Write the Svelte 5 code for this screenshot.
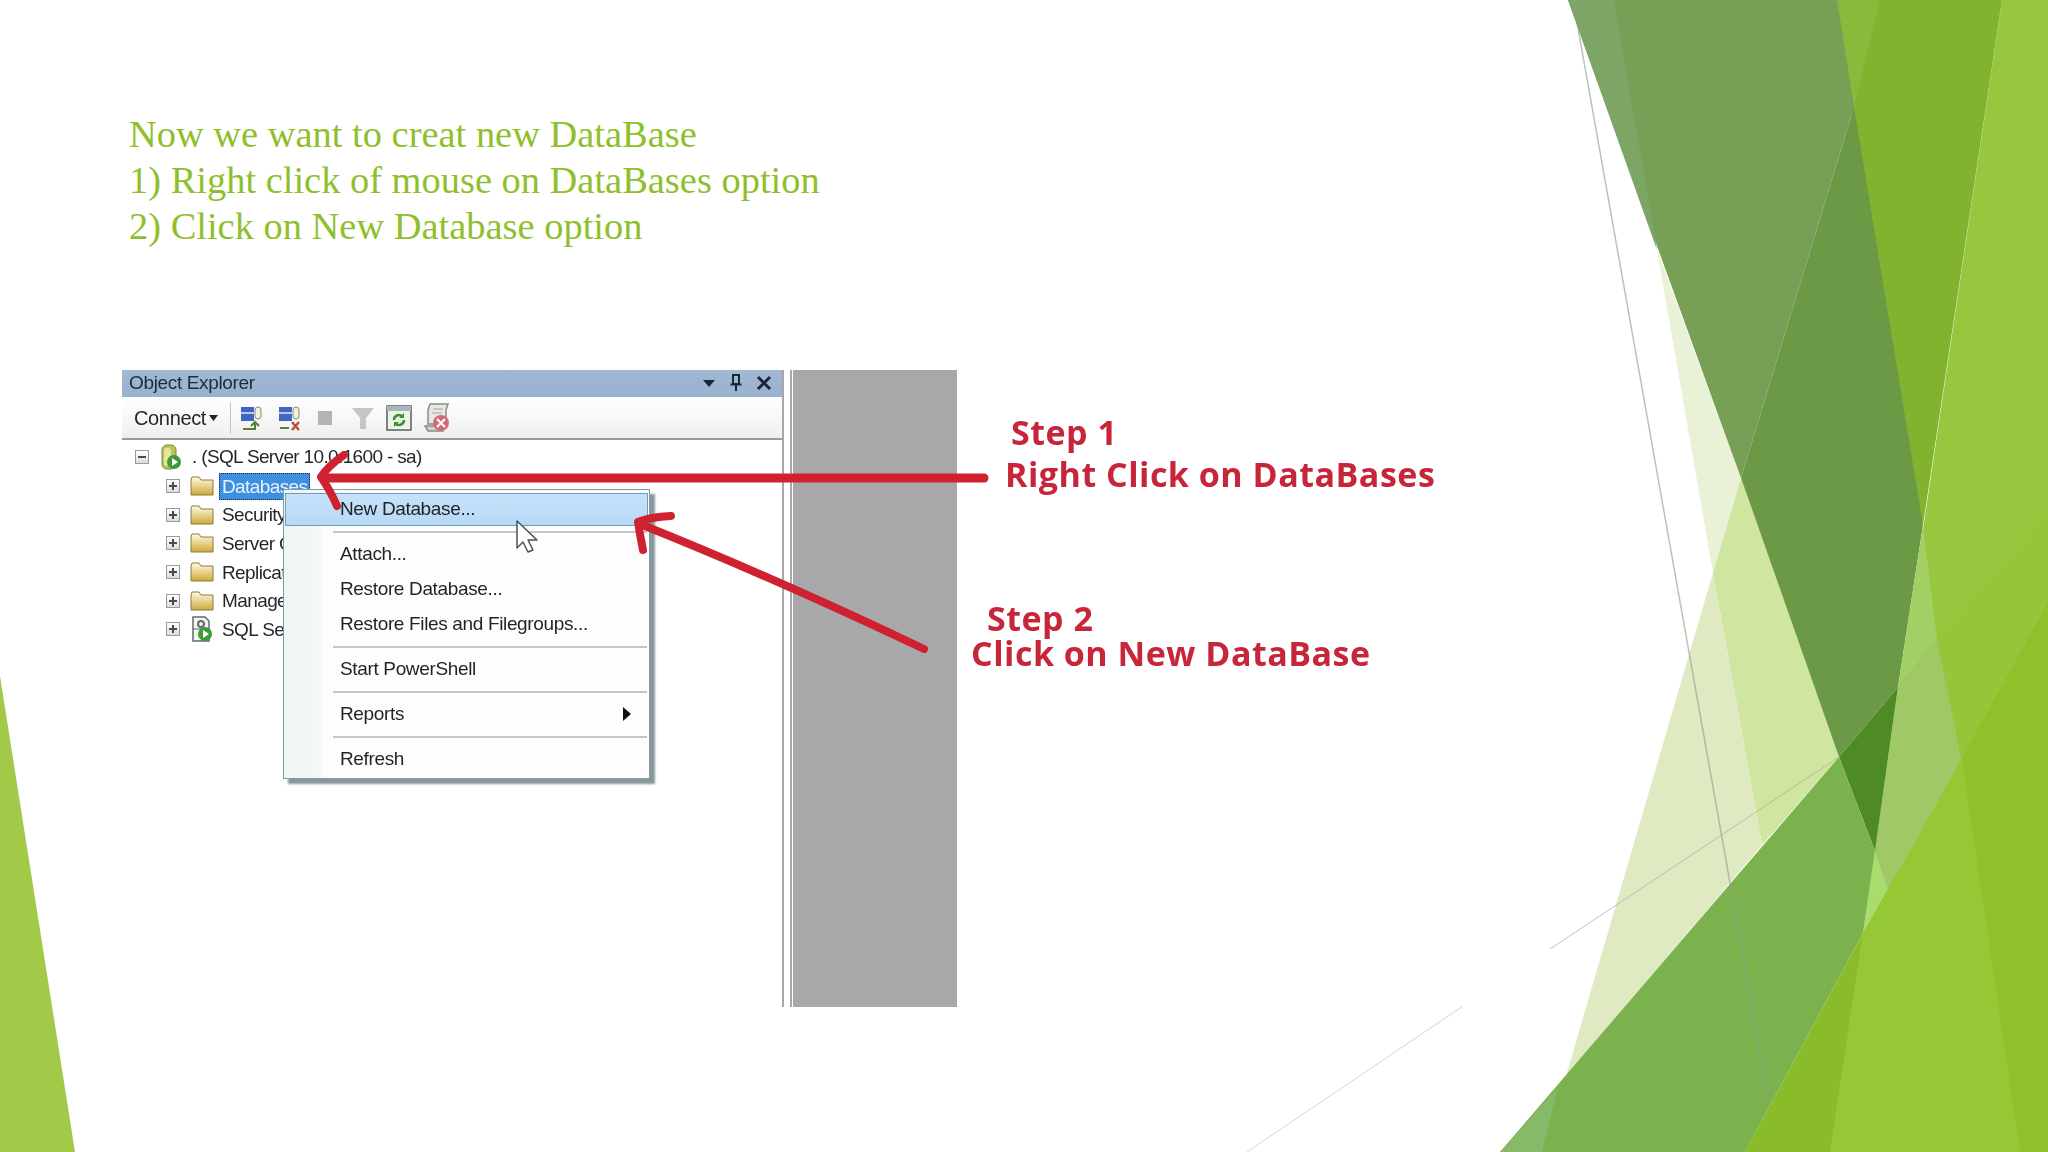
<script lang="ts">
  const intro = [
    "Now we want to creat new DataBase",
    "1) Right click of mouse on DataBases option",
    "2) Click on New Database option",
  ];

  const facets = [
    { points: "2002,0 2048,0 2048,1152 1830,1152", fill: "#98c63e" },
    { points: "1837,0 2002,0 1923,525 1900,530", fill: "#82b32f" },
    { points: "1837,0 1880,0 1854,107", fill: "#8aba3b" },
    { points: "1657,250 1741,478 1713,573", fill: "#e9f2d6" },
    { points: "1713,573 1741,478 1839,757 1762,845", fill: "#d0e5a0" },
    { points: "1713,573 1762,845 1566,1076", fill: "#dfeac3" },
    { points: "1741,478 1713,573 1566,1076", fill: "#dfeac3" },
    { points: "1854,107 1923,525 1898,687 1839,757 1741,478", fill: "#6b9945" },
    { points: "1568,0 1837,0 1854,107 1741,478", fill: "#789f56" },
    { points: "1568,0 1614,0 1657,250", fill: "#7da666" },
    { points: "1923,525 1937,639 1898,687", fill: "#a3d065" },
    { points: "1898,687 1937,639 1962,762 1888,889 1875,851", fill: "#a0c866" },
    { points: "1937,639 2048,514 2048,604 1962,762", fill: "#95c63a" },
    { points: "1839,757 1898,687 1875,851", fill: "#4f8b24" },
    { points: "1500,1152 1839,757 1875,851 1863,933 1745,1152", fill: "#7bb24d" },
    { points: "1500,1152 1558,1087 1542,1152", fill: "#86b968" },
    { points: "1875,851 1888,889 1863,933", fill: "#a9dc6c" },
    { points: "2048,602 2048,1152 1745,1152", fill: "#92c02b" },
    { points: "1863,933 1830,1152 1745,1152", fill: "#8abb2b" },
    { points: "1863,933 1962,760 2020,1152 1830,1152", fill: "#96c835" },
  ];

  const treeRows = [
    { label: "Databases", icon: "folder", selected: true },
    { label: "Security", icon: "folder" },
    { label: "Server Objects", icon: "folder" },
    { label: "Replication", icon: "folder" },
    { label: "Management", icon: "folder" },
    { label: "SQL Server Agent", icon: "agent" },
  ];

  const menuGroups = [
    ["New Database..."],
    ["Attach...", "Restore Database...", "Restore Files and Filegroups..."],
    ["Start PowerShell"],
    ["Reports"],
    ["Refresh"],
  ];
</script>

<div class="slide">
  <svg class="facets" viewBox="0 0 2048 1152" aria-hidden="true">
    <polygon points="0,676 75,1152 0,1152" fill="#a2c948" />
    {#each facets as facet}
      <polygon points={facet.points} fill={facet.fill} />
    {/each}
    <line x1="1573" y1="0" x2="1769" y2="1102" stroke="#8f9a88" stroke-opacity="0.6" stroke-width="1.5" />
    <line x1="1550" y1="949" x2="1839" y2="757" stroke="#a9ad9f" stroke-opacity="0.7" />
    <line x1="1247" y1="1152" x2="1463" y2="1006" stroke="#d4d4d4" />
  </svg>

  <div class="content">
    <div class="intro">
      {#each intro as line}
        <div>{line}</div>
      {/each}
    </div>

    <div class="shot-row">
      <section class="explorer">
        <header class="title-bar">
          <span>Object Explorer</span>
          <div class="title-icons">
            <svg width="14" height="10" viewBox="0 0 14 10"><path d="M1 2h12L7 9z" fill="#1c2530" /></svg>
            <svg width="14" height="18" viewBox="0 0 14 18">
              <path d="M4 1h6v9H4zM1.5 10.500h11M7 11v6" fill="none" stroke="#1c2530" stroke-width="2" />
            </svg>
            <svg width="16" height="16" viewBox="0 0 16 16">
              <path d="M2 2l12 12M14 2L2 14" stroke="#1c2530" stroke-width="3" />
            </svg>
          </div>
        </header>

        <div class="toolbar">
          <span class="connect">Connect</span>
          <svg class="caret" width="9" height="6" viewBox="0 0 9 6"><path d="M0 0h9L4.500 6z" fill="#222" /></svg>
          <span class="tool-sep"></span>
          <svg class="tool" width="26" height="26" viewBox="0 0 26 26">
            <rect x="2" y="2" width="13" height="14" fill="#3f66c4" />
            <rect x="2" y="7" width="13" height="2" fill="#b9c9ee" />
            <rect x="16" y="2" width="6" height="12" rx="3" fill="#f4f0dc" stroke="#8c8c7a" />
            <path d="M4 24h12v-7M12 21l4-4 4 4" fill="none" stroke="#58803a" stroke-width="2" />
          </svg>
          <svg class="tool" width="26" height="26" viewBox="0 0 26 26">
            <rect x="2" y="2" width="13" height="14" fill="#3f66c4" />
            <rect x="2" y="7" width="13" height="2" fill="#b9c9ee" />
            <rect x="16" y="2" width="6" height="12" rx="3" fill="#f4f0dc" stroke="#8c8c7a" />
            <path d="M3 23h9" stroke="#58803a" stroke-width="2" />
            <path d="M15 17l7 8M22 17l-7 8" stroke="#c0503c" stroke-width="2.500" />
          </svg>
          <span class="stop"></span>
          <svg class="tool funnel" width="24" height="24" viewBox="0 0 24 24">
            <path d="M1 2h22l-8 10v11h-6V12z" fill="#c3c6c3" />
          </svg>
          <svg class="tool refresh" width="26" height="26" viewBox="0 0 26 26">
            <rect x="1" y="1" width="24" height="24" fill="#eef2ea" stroke="#56605a" stroke-width="1.500" />
            <rect x="1" y="1" width="24" height="5" fill="#a9b6b8" />
            <path d="M8 15a5 5 0 0 1 9-3M18 15a5 5 0 0 1-9 3" fill="none" stroke="#3c8f30" stroke-width="2.500" />
            <path d="M18 8v5h-5zM8 22v-5h5z" fill="#3c8f30" />
          </svg>
          <svg class="tool" width="28" height="32" viewBox="0 0 28 32">
            <path d="M7 2h18l-2 6v14H5V8z" fill="#e8e8e2" stroke="#8b8b8b" stroke-width="1.500" />
            <path d="M2 24h18v5H5z" fill="#d2d2cc" stroke="#8b8b8b" stroke-width="1.500" />
            <path d="M10 7h10M9 11h10" stroke="#a0a0a0" />
            <circle cx="18" cy="21" r="8" fill="#d26a78" />
            <path d="M14 17l8 8M22 17l-8 8" stroke="#fff" stroke-width="2" />
          </svg>
        </div>

        <div class="tree">
          <div class="row server">
            <span class="expander"><i></i></span>
            <svg class="node-icon" width="24" height="26" viewBox="0 0 24 26">
              <rect x="3" y="1" width="14" height="24" rx="5" fill="#b8c55a" stroke="#7d8a3a" />
              <rect x="5" y="4" width="7" height="18" rx="3" fill="#e5e59b" />
              <circle cx="15" cy="18" r="7" fill="#3e9a37" />
              <path d="M13 14l6 4-6 4z" fill="#fff" />
            </svg>
            <span class="label">. (SQL Server 10.0.1600 - sa)</span>
          </div>

          {#each treeRows as row}
            <div class="row child">
              <span class="expander plus"><i></i></span>
              {#if row.icon === "folder"}
                <svg class="node-icon" width="24" height="20" viewBox="0 0 24 20">
                  <defs>
                    <linearGradient id="folder-fill" x1="0" y1="0" x2="0" y2="1">
                      <stop offset="0" stop-color="#fffbe2" />
                      <stop offset="1" stop-color="#cfa83a" />
                    </linearGradient>
                  </defs>
                  <path d="M1 4l1-3h7l2 3h12v15H1z" fill="url(#folder-fill)" stroke="#8e7a3f" />
                </svg>
              {:else}
                <svg class="node-icon" width="24" height="26" viewBox="0 0 24 26">
                  <path d="M3 1h12l4 4v20H3z" fill="#f4f6f2" stroke="#5f6b66" stroke-width="1.500" />
                  <circle cx="11" cy="8" r="3" fill="none" stroke="#5f6b66" stroke-width="2" />
                  <path d="M3 13h12" stroke="#5f6b66" />
                  <circle cx="15" cy="18" r="7" fill="#3e9a37" />
                  <path d="M13 14l6 4-6 4z" fill="#fff" />
                </svg>
              {/if}
              <span class="label" class:selected={row.selected}>{row.label}</span>
            </div>
          {/each}

          <div class="context-menu">
            {#each menuGroups as group, groupIndex}
              {#if groupIndex > 0}
                <div class="menu-sep" class:first={groupIndex === 1}></div>
              {/if}
              {#each group as item}
                <div class="menu-item" class:active={item === "New Database..."}>
                  <span>{item}</span>
                  {#if item === "Reports"}
                    <svg width="8" height="14" viewBox="0 0 8 14"><path d="M0 0l8 7-8 7z" fill="#111" /></svg>
                  {/if}
                </div>
              {/each}
            {/each}
          </div>
        </div>
      </section>

      <div class="splitter"></div>

      <div class="notes">
        <p class="note first">
          <span class="step">Step 1</span>
          <span class="action">Right Click on DataBases</span>
        </p>
        <p class="note second">
          <span class="step">Step 2</span>
          <span class="action">Click on New DataBase</span>
        </p>
      </div>
    </div>
  </div>

  <svg class="overlay" viewBox="0 0 2048 1152" aria-hidden="true">
    <g fill="none" stroke="#cf2230" stroke-linecap="round" stroke-linejoin="round">
      <path d="M984 478L324 478" stroke-width="9" />
      <path d="M344 455Q328 466 321 477Q330 490 337 506" stroke-width="8" />
      <path d="M924 649Q775 578 640 524" stroke-width="8" />
      <path d="M671 516Q650 517 638 522Q640 535 643 550" stroke-width="8" />
    </g>
    <path
      d="M517 521v27l6-6 5 10 5-2-5-10h9z"
      fill="#fff"
      stroke="#47525a"
      stroke-width="1.500"
      stroke-linejoin="round"
    />
  </svg>
</div>

<style>
  :global(body) {
    margin: 0;
    background: #fff;
  }

  .slide {
    position: relative;
    width: 2048px;
    height: 1152px;
    overflow: hidden;
    background: #fff;
  }

  .facets,
  .overlay {
    position: absolute;
    inset: 0;
    width: 2048px;
    height: 1152px;
    pointer-events: none;
  }

  .overlay {
    filter: blur(0.4px);
  }

  .content {
    position: relative;
    padding: 112px 0 0 122px;
  }

  .intro {
    padding-left: 7px;
    color: #8fbf2c;
    font-family: "Liberation Serif", serif;
    font-size: 38.45px;
    line-height: 45.8px;
    white-space: nowrap;
  }

  .shot-row {
    display: flex;
    width: 835px;
    height: 637px;
    margin-top: 120.6px;
  }

  .explorer {
    display: flex;
    flex-direction: column;
    flex: none;
    box-sizing: border-box;
    width: 662px;
    border-right: 2px solid #a8a8ac;
    background: #fff;
    color: #23282c;
    font-family: "Liberation Sans", sans-serif;
    font-size: 19px;
    letter-spacing: -0.35px;
    filter: blur(0.45px);
  }

  .title-bar {
    display: flex;
    align-items: center;
    justify-content: space-between;
    height: 27px;
    padding: 0 10px 0 7px;
    background: linear-gradient(#a2b8d4, #98b1cf);
    color: #1d2a38;
  }

  .title-icons {
    display: flex;
    align-items: center;
    gap: 13px;
  }

  .toolbar {
    display: flex;
    align-items: center;
    box-sizing: border-box;
    height: 43px;
    padding: 2px 0 0 12px;
    border-bottom: 2px solid #9b9b9b;
    background: linear-gradient(#fff, #efefef);
  }

  .connect {
    font-size: 20px;
  }

  .caret {
    margin-left: 3px;
  }

  .tool-sep {
    width: 1px;
    height: 32px;
    margin: 0 8px 0 12px;
    background: #c4c4c4;
  }

  .tool {
    flex: none;
    margin-right: 12px;
  }

  .stop {
    width: 14px;
    height: 14px;
    margin: 0 19px 0 3px;
    background: #b2b4b2;
  }

  .funnel {
    margin-right: 11px;
  }

  .refresh {
    margin-right: 11px;
  }

  .tree {
    position: relative;
    flex: 1;
    padding-top: 3px;
  }

  .row {
    display: flex;
    align-items: center;
    height: 28.7px;
    white-space: nowrap;
  }

  .server {
    padding-left: 13px;
  }

  .child {
    padding-left: 44px;
  }

  .expander {
    position: relative;
    flex: none;
    box-sizing: border-box;
    width: 14px;
    height: 14px;
    border: 1px solid #9a9a9a;
    background: linear-gradient(#fff, #dcdcdc);
  }

  .expander i {
    position: absolute;
    top: 5px;
    left: 2px;
    width: 8px;
    height: 2px;
    background: #4a4a4a;
  }

  .plus::after {
    content: "";
    position: absolute;
    top: 2px;
    left: 5px;
    width: 2px;
    height: 8px;
    background: #4a4a4a;
  }

  .node-icon {
    flex: none;
  }

  .server .node-icon {
    margin-left: 10px;
  }

  .server .label {
    margin-left: 9px;
    letter-spacing: -0.65px;
  }

  .child .node-icon {
    margin-left: 10px;
  }

  .child .label {
    box-sizing: border-box;
    height: 27px;
    margin-left: 5px;
    padding: 0 2px;
    line-height: 26px;
    letter-spacing: -0.6px;
    border: 1px dotted transparent;
  }

  .child .label.selected {
    border-color: #1b2b4c;
    background: #3f8fe0;
    color: #e6f2ff;
  }

  .context-menu {
    position: absolute;
    top: 49px;
    left: 161px;
    box-sizing: border-box;
    width: 367px;
    height: 290px;
    padding: 3px 2px 0;
    border: 1px solid #7f9ba3;
    background: linear-gradient(to right, #eef7f5, #f6f7f6 38px, #fdfdfd 38px);
    box-shadow: 5px 5px 2px #87979c;
    color: #1e2226;
  }

  .menu-item {
    display: flex;
    align-items: center;
    justify-content: space-between;
    height: 35px;
    padding: 0 16px 0 54px;
  }

  .menu-item.active {
    height: 33px;
    margin: 0 -1px;
    border: 1px solid #6a9fb5;
    box-sizing: border-box;
    background: linear-gradient(#c7e2fa, #b7d9f6);
  }

  .menu-sep {
    height: 2px;
    margin: 4px 0 4px 47px;
    background: #c6c6c6;
  }

  .menu-sep.first {
    margin: 5px 0 4px 47px;
  }

  .splitter {
    flex: none;
    box-sizing: border-box;
    width: 3px;
    margin-left: 6px;
    border-left: 2px solid #a8a8ac;
    background: #fff;
  }

  .notes {
    flex: none;
    position: relative;
    width: 164px;
    height: 637px;
    background: #a8a7a9;
  }

  .note {
    position: absolute;
    left: 164px;
    margin: 0;
    color: #c7263a;
    font-family: "Open Sans", "Liberation Sans", sans-serif;
    font-size: 34px;
    font-weight: 700;
    letter-spacing: 0.5px;
    white-space: nowrap;
    filter: blur(0.4px);
  }

  .note span {
    display: block;
  }

  .note.first {
    top: 41px;
    line-height: 42px;
  }

  .first .step {
    margin-left: 54px;
  }

  .first .action {
    margin-left: 48px;
  }

  .note.second {
    top: 231px;
    line-height: 35px;
  }

  .second .step {
    margin-left: 30px;
  }

  .second .action {
    margin-left: 14px;
  }
</style>
